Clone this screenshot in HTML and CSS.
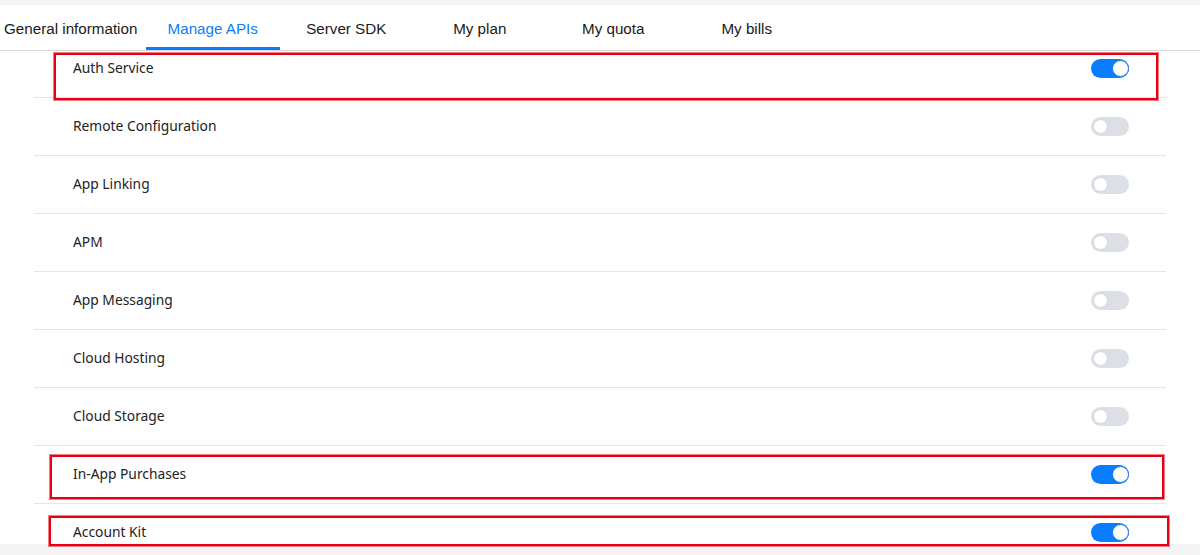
FILE: index.html
```html
<!DOCTYPE html>
<html>
<head>
<meta charset="utf-8">
<link rel="stylesheet" href="styles.css">
</head>
<body>
<div class="page">
  <div class="tabs">
    <div class="tab first">General information</div>
    <div class="tab active">Manage APIs</div>
    <div class="tab">Server SDK</div>
    <div class="tab">My plan</div>
    <div class="tab">My quota</div>
    <div class="tab">My bills</div>
  </div>
  <div class="list">
    <div class="rows">
      <div class="row"><span class="name">Auth Service</span><span class="switch on"></span></div>
      <div class="row"><span class="name">Remote Configuration</span><span class="switch"></span></div>
      <div class="row"><span class="name">App Linking</span><span class="switch"></span></div>
      <div class="row"><span class="name">APM</span><span class="switch"></span></div>
      <div class="row"><span class="name">App Messaging</span><span class="switch"></span></div>
      <div class="row"><span class="name">Cloud Hosting</span><span class="switch"></span></div>
      <div class="row"><span class="name">Cloud Storage</span><span class="switch"></span></div>
      <div class="row"><span class="name">In-App Purchases</span><span class="switch on"></span></div>
      <div class="row"><span class="name">Account Kit</span><span class="switch on"></span></div>
    </div>
  </div>
  <div class="mark mark1"></div>
  <div class="mark mark2"></div>
  <div class="mark mark3"></div>
</div>
</body>
</html>
```

FILE: styles.css
```css
html, body {
  margin: 0;
  padding: 0;
}
body {
  background: #f4f4f4;
  width: 1200px;
  height: 555px;
  overflow: hidden;
}
.page {
  position: relative;
  margin-top: 5px;
  height: 539px;
  background: #fff;
}
.tabs {
  display: flex;
  height: 45px;
  border-bottom: 1px solid #d9d9d9;
  font-family: "Liberation Sans", Arial, sans-serif;
  font-size: 15.2px;
  color: #1a1a1a;
}
.tab {
  width: 133.5px;
  box-sizing: border-box;
  text-align: center;
  line-height: 47px;
  white-space: nowrap;
}
.tab.first {
  width: 146px;
  text-align: left;
  padding-left: 4px;
}
.tab.active {
  color: #0a7cff;
  box-shadow: inset 0 -3px 0 #0a7cff;
}
.list {
  height: 493px;
  overflow: hidden;
}
.rows {
  margin: -11px 34px 0 34px;
  font-family: "Noto Sans", "Open Sans", sans-serif;
  font-size: 13.8px;
  color: #222;
}
.row {
  height: 57px;
  border-bottom: 1px solid #e6e6e6;
  display: flex;
  align-items: center;
  justify-content: space-between;
  padding: 0 37px 0 39px;
}
.name {
  padding-bottom: 3px;
}
.switch {
  position: relative;
  width: 38px;
  height: 19px;
  border-radius: 10px;
  background: #dcdfe6;
}
.switch::after {
  content: "";
  position: absolute;
  top: 2px;
  left: 2px;
  width: 15px;
  height: 15px;
  border-radius: 50%;
  background: #fff;
  box-sizing: border-box;
  border: 1px solid #d3d6de;
}
.switch.on {
  background: #0a7cff;
}
.switch.on::after {
  left: 21px;
  border: 1px solid #0a7cff;
  top: 1px;
  width: 17px;
  height: 17px;
}
.mark {
  position: absolute;
  border: 2px solid #e60012;
  box-sizing: border-box;
  outline: 0.5px solid rgba(230, 0, 18, 0.5);
}
.mark1 { left: 54px; top: 48px; width: 1104px; height: 47px; }
.mark2 { left: 50px; top: 450px; width: 1114px; height: 44px; }
.mark3 { left: 49px; top: 511px; width: 1120px; height: 30px; }
```
